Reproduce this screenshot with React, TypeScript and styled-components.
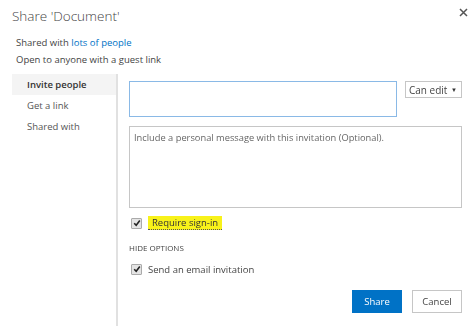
import React, { useState } from 'react';
import styled, { createGlobalStyle } from 'styled-components';

const GlobalStyle = createGlobalStyle`
  html, body {
    margin: 0;
    padding: 0;
    background: #fff;
  }
  body {
    font-family: 'Open Sans', 'Liberation Sans', sans-serif;
    color: #444;
  }
`;

const navItems = ['Invite people', 'Get a link', 'Shared with'];

interface CheckProps {
  checked: boolean;
  onToggle: () => void;
}

const CheckBox: React.FC<CheckProps> = ({ checked, onToggle }) => (
  <Box role="checkbox" aria-checked={checked} onClick={onToggle}>
    {checked && (
      <svg width="8" height="8" viewBox="0 0 8 8">
        <path d="M1.2 4.2L3.2 6.2L6.8 1.6" fill="none" stroke="#222" strokeWidth="1.6" />
      </svg>
    )}
  </Box>
);

const App: React.FC = () => {
  const [active, setActive] = useState(0);
  const [requireSignIn, setRequireSignIn] = useState(true);
  const [sendEmail, setSendEmail] = useState(true);

  return (
    <>
      <GlobalStyle />
      <Dialog>
        <Header>
          <Title>Share &#39;Document&#39;</Title>
          <CloseButton aria-label="Close">
            <svg width="9" height="9" viewBox="0 0 9 9">
              <path d="M1 1L8 8M8 1L1 8" stroke="#555" strokeWidth="1.5" />
            </svg>
          </CloseButton>
        </Header>
        <Info>
          <InfoLine>
            Shared with <InfoLink href="#">lots of people</InfoLink>
          </InfoLine>
          <InfoLine>Open to anyone with a guest link</InfoLine>
        </Info>
        <Body>
          <Nav>
            {navItems.map((label, index) => (
              <NavItem key={label} $active={index === active} onClick={() => setActive(index)}>
                {label}
              </NavItem>
            ))}
          </Nav>
          <Content>
            <InputRow>
              <PeopleInput autoFocus />
              <PermissionSelect>
                Can edit
                <Caret>&#9660;</Caret>
              </PermissionSelect>
            </InputRow>
            <Message placeholder="Include a personal message with this invitation (Optional)." />
            <CheckRow>
              <CheckBox checked={requireSignIn} onToggle={() => setRequireSignIn(!requireSignIn)} />
              <Highlighted>Require sign-in</Highlighted>
            </CheckRow>
            <HideOptions>HIDE OPTIONS</HideOptions>
            <CheckRow>
              <CheckBox checked={sendEmail} onToggle={() => setSendEmail(!sendEmail)} />
              <CheckLabel>Send an email invitation</CheckLabel>
            </CheckRow>
            <Buttons>
              <Button $primary>Share</Button>
              <Button>Cancel</Button>
            </Buttons>
          </Content>
        </Body>
      </Dialog>
    </>
  );
};
export default App;

const Dialog = styled.div`
  width: 474px;
  height: 330px;
  box-sizing: border-box;
  padding: 0 12px;
  overflow: hidden;
`;

const Header = styled.div`
  display: flex;
  align-items: center;
  justify-content: space-between;
  height: 32px;
  margin-right: -6px;
`;

const Title = styled.h1`
  margin: 0;
  font-size: 13.5px;
  font-weight: 300;
  color: #444;
`;

const CloseButton = styled.button`
  display: flex;
  border: none;
  background: none;
  padding: 0;
  margin-top: -8px;
  cursor: pointer;
`;

const Info = styled.div`
  display: flex;
  flex-direction: column;
  gap: 1px;
  padding: 3px 0 0 4px;
`;

const InfoLine = styled.div`
  font-size: 9.5px;
  line-height: 16px;
  color: #444;
`;

const InfoLink = styled.a`
  color: #0072c6;
  text-decoration: none;
`;

const Body = styled.div`
  display: flex;
  margin-top: 6px;
`;

const Nav = styled.div`
  display: flex;
  flex-direction: column;
  width: 104px;
  height: 252px;
  border-right: 2px solid #e1e1e1;
`;

const NavItem = styled.div<{ $active?: boolean }>`
  height: 21px;
  line-height: 21px;
  padding-left: 15px;
  font-size: 9.5px;
  color: ${(p) => (p.$active ? '#333' : '#555')};
  font-weight: ${(p) => (p.$active ? 600 : 400)};
  background: ${(p) => (p.$active ? '#f4f4f4' : 'transparent')};
  cursor: pointer;
`;

const Content = styled.div`
  flex: 1;
  display: flex;
  flex-direction: column;
  padding: 7px 0 0 11px;
`;

const InputRow = styled.div`
  display: flex;
  align-items: flex-start;
  justify-content: space-between;
`;

const PeopleInput = styled.input`
  width: 268px;
  height: 36px;
  box-sizing: border-box;
  border: 1px solid #8ab9e6;
  outline: none;
  padding: 0 5px;
  font: inherit;
  font-size: 11px;
  caret-color: #333;
`;

const PermissionSelect = styled.div`
  display: flex;
  align-items: center;
  justify-content: space-between;
  width: 57px;
  height: 17px;
  box-sizing: border-box;
  padding: 0 4px 0 3px;
  border: 1px solid #c6c6c6;
  font-size: 10px;
  color: #444;
`;

const Caret = styled.span`
  font-size: 6px;
  color: #333;
`;

const Message = styled.textarea`
  width: 333px;
  height: 82px;
  box-sizing: border-box;
  margin-top: 9px;
  border: 1px solid #c6c6c6;
  padding: 4px 4px;
  resize: none;
  outline: none;
  font: inherit;
  font-size: 9.3px;
  &::placeholder {
    color: #666;
  }
`;

const CheckRow = styled.label`
  display: flex;
  align-items: center;
  gap: 6px;
  height: 16px;
  margin-top: 7px;
`;

const Box = styled.span`
  display: flex;
  align-items: center;
  justify-content: center;
  width: 9px;
  height: 9px;
  margin-left: 2px;
  border: 1px solid #aaa;
  border-radius: 1px;
  background: #e4e4e4;
  cursor: pointer;
`;

const Highlighted = styled.span`
  font-size: 9.5px;
  color: #333;
  background: #f8f21a;
  padding: 1px 4px 0;
  border-bottom: 1px dotted #555;
  line-height: 12px;
`;

const CheckLabel = styled.span`
  font-size: 9.5px;
  color: #444;
`;

const HideOptions = styled.div`
  font-size: 8px;
  color: #444;
  margin: 11px 0 1px;
`;

const Buttons = styled.div`
  display: flex;
  justify-content: flex-end;
  gap: 10px;
  margin-top: 13px;
`;

const Button = styled.button<{ $primary?: boolean }>`
  width: 50px;
  height: 23px;
  box-sizing: border-box;
  font: inherit;
  font-size: 9.5px;
  border: 1px solid ${(p) => (p.$primary ? '#0072c6' : '#c6c6c6')};
  background: ${(p) => (p.$primary ? '#0072c6' : '#fff')};
  color: ${(p) => (p.$primary ? '#fff' : '#444')};
  cursor: pointer;
`;
